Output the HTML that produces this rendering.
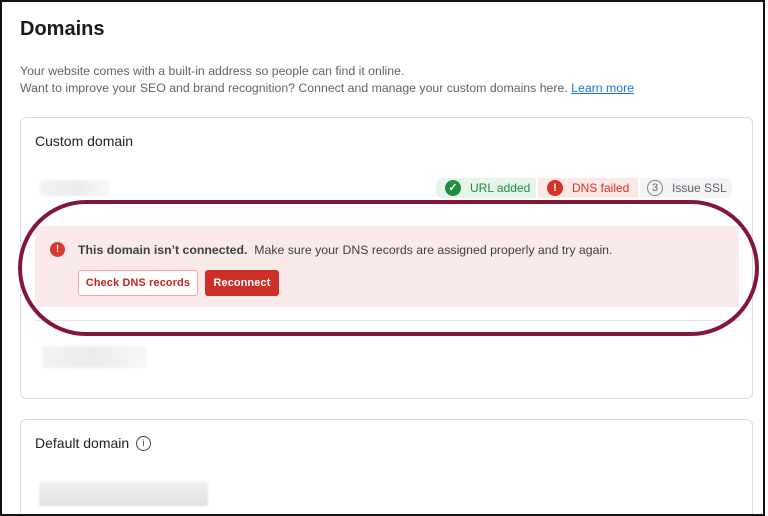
<!DOCTYPE html>
<html><head><meta charset="utf-8"><style>
*{box-sizing:border-box;margin:0;padding:0}
body{width:768px;height:516px;overflow:hidden;background:#fff;font-family:"Liberation Sans",sans-serif;position:relative}
.frame{position:absolute;left:0;top:0;width:765px;height:516px;border:2px solid #111;overflow:hidden}
.in{position:absolute;left:-2px;top:-2px;width:768px;height:516px}
.abs{position:absolute}
h1{position:absolute;left:20px;top:18px;font-size:20px;font-weight:bold;color:#1a1a1a}
.desc{left:20px;top:63px;font-size:12.3px;line-height:17px;color:#5f6368}
.desc a{color:#1a73e8;text-decoration:underline}
.card{border:1px solid #dadce0;border-radius:6px;background:#fff}
.t{font-size:14px;color:#202124}
.blur{background:linear-gradient(90deg,#f2f2f2,#ececec,#f7f7f7);border-radius:2px;filter:blur(1px)}
.pill{position:absolute;top:178px;height:20px;font-size:12px;line-height:20px;display:flex;align-items:center}
.ic{width:16px;height:16px;border-radius:50%;display:inline-block;margin-right:9px;position:relative;color:#fff;font-size:11px;font-weight:bold;text-align:center;line-height:16px}
.btn{position:absolute;top:270px;height:26px;font-size:10.8px;font-weight:bold;line-height:24px;text-align:center;border-radius:3px;letter-spacing:.2px}
</style></head><body>
<div class="frame"><div class="in">
<h1>Domains</h1>
<div class="abs desc">Your website comes with a built-in address so people can find it online.<br>Want to improve your SEO and brand recognition? Connect and manage your custom domains here. <a>Learn more</a></div>
<div class="abs card" style="left:20px;top:117px;width:733px;height:282px"></div>
<div class="abs t" style="left:35px;top:133px">Custom domain</div>
<div class="abs blur" style="left:40px;top:180px;width:70px;height:16px"></div>
<div class="pill" style="left:436px;width:100px;background:#e6f4ea;color:#1e8e3e;padding-left:9px;border-radius:6px 0 0 6px"><span class="ic" style="background:#1e8e3e">✓</span>URL added</div>
<div class="pill" style="left:538px;width:100px;background:#fce8e6;color:#d93025;padding-left:9px"><span class="ic" style="background:#d93025">!</span>DNS failed</div>
<div class="pill" style="left:640px;width:92px;background:#f1f3f4;color:#5f6368;padding-left:7px;border-radius:0 6px 6px 0"><span class="ic" style="border:1px solid #80868b;color:#5f6368;font-weight:normal;line-height:14px">3</span>Issue SSL</div>
<div class="abs" style="left:35px;top:226px;width:704px;height:81px;background:#fbeaea"></div>
<div class="abs" style="left:35px;top:320px;width:704px;height:1px;background:#e4e4e4"></div>
<div class="abs" style="left:50px;top:242px;width:15px;height:15px;border-radius:50%;background:#d93a2f;color:#fff;font-size:10px;font-weight:bold;text-align:center;line-height:15px">!</div>
<div class="abs" style="left:78px;top:243px;font-size:12.3px;color:#3c4043"><b>This domain isn’t connected.</b>&nbsp; Make sure your DNS records are assigned properly and try again.</div>
<div class="btn" style="left:78px;width:120px;border:1px solid #eaa9a3;color:#c5221f;background:#fff">Check DNS records</div>
<div class="btn" style="left:205px;width:74px;background:#cc3029;color:#fff;line-height:26px">Reconnect</div>
<div class="abs" style="left:18px;top:200px;width:741px;height:136px;border:4px solid #82173a;border-radius:68px"></div>
<div class="abs blur" style="left:42px;top:346px;width:105px;height:22px"></div>
<div class="abs card" style="left:20px;top:419px;width:733px;height:110px"></div>
<div class="abs t" style="left:35px;top:435px">Default domain</div>
<div class="abs" style="left:136px;top:436px;width:15px;height:15px;border:1px solid #444;border-radius:50%;font-size:9px;text-align:center;line-height:13px;color:#444">i</div>
<div class="abs blur" style="left:39px;top:482px;width:169px;height:24px;background:linear-gradient(180deg,#f0f0f0,#e0e0e0)"></div>
</div></div>
</body></html>
